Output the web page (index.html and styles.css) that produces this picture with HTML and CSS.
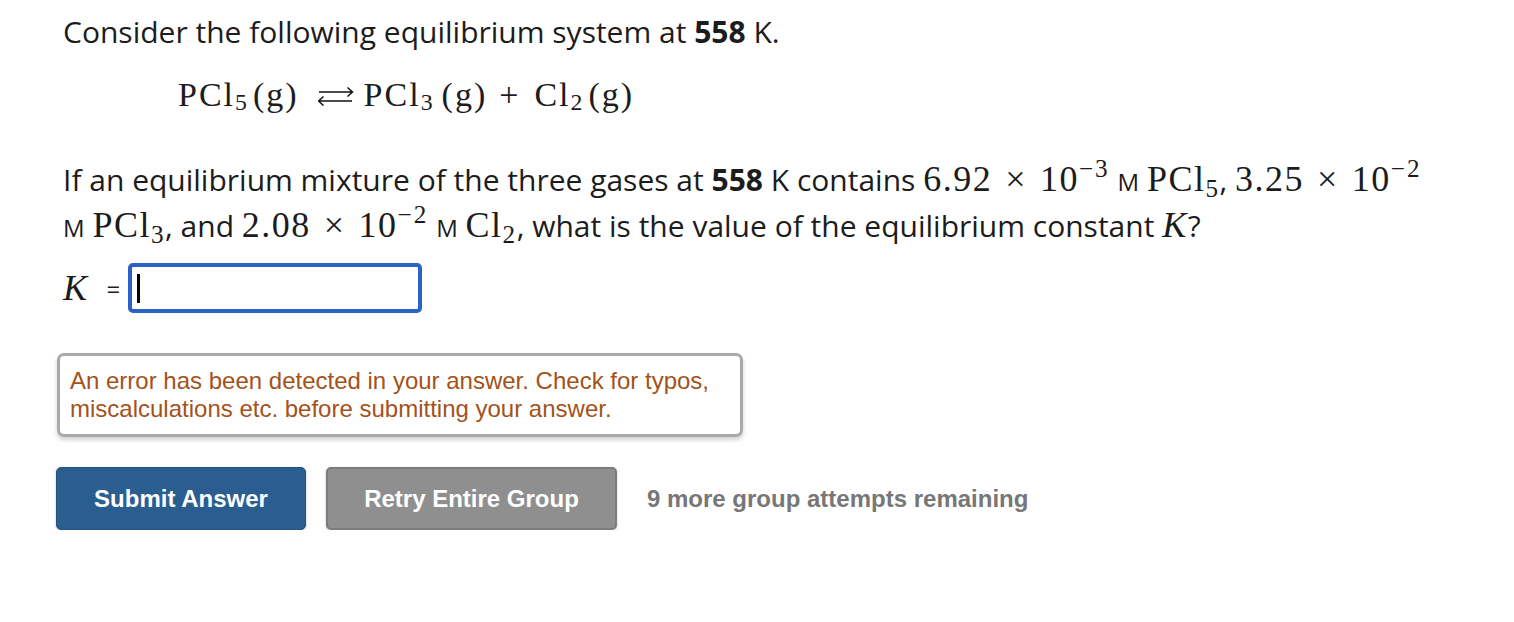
FILE: index.html
```html
<!DOCTYPE html>
<html>
<head>
<meta charset="utf-8">
<link rel="stylesheet" href="styles.css">
</head>
<body>
<div class="page">
  <p class="intro">Consider the following equilibrium system at <b>558</b> K.</p>
  <div class="equation">
    <span class="dm">PCl<sub>5</sub></span><span class="dm paren">(g)</span>
    <svg class="arrows" width="36" height="20" viewBox="0 0 36 20"><path d="M1 6 H34 M29.5 1.5 L34.5 6 L29.5 10.5 M1 15 H34 M5.5 10.5 L0.5 15 L5.5 19.5" fill="none" stroke="#111" stroke-width="1.5"/></svg>
    <span class="dm">PCl<sub>3</sub></span><span class="dm paren wide">(g)</span>
    <span class="dm op">+</span>
    <span class="dm">Cl<sub>2</sub></span><span class="dm paren">(g)</span>
  </div>
  <p class="question">If an equilibrium mixture of the three gases at <b>558</b> K contains <span class="m">6.92<span class="times">×</span>10<sup>−3</sup></span> <span class="unit">M</span> <span class="m">PCl<sub>5</sub></span>, <span class="m">3.25<span class="times">×</span>10<sup>−2</sup></span> <span class="unit">M</span> <span class="m">PCl<sub>3</sub></span>, and <span class="m">2.08<span class="times">×</span>10<sup>−2</sup></span> <span class="unit">M</span> <span class="m">Cl<sub>2</sub></span>, what is the value of the equilibrium constant <span class="m"><i>K</i></span>?</p>
  <div class="answer">
    <span class="m"><i>K</i></span><span class="eq">=</span>
    <div class="input"><span class="caret"></span></div>
  </div>
  <div class="error">An error has been detected in your answer. Check for typos, miscalculations etc. before submitting your answer.</div>
  <div class="actions">
    <button class="btn submit">Submit Answer</button>
    <button class="btn retry">Retry Entire Group</button>
    <span class="remaining">9 more group attempts remaining</span>
  </div>
</div>
</body>
</html>
```

FILE: styles.css
```css
html, body {
  margin: 0;
  padding: 0;
  background: #fff;
}
.page {
  padding: 10px 0 0 63px;
  font-family: "Open Sans", "Liberation Sans", sans-serif;
  font-size: 30px;
  color: #1c1c1c;
}
p { margin: 0; }
.intro {
  line-height: 44px;
}
.m {
  font-family: "Liberation Serif", "DejaVu Serif", serif;
  font-size: 36px;
  line-height: 1;
  letter-spacing: 1.5px;
}
.m sub {
  font-size: 0.7em;
  vertical-align: -0.25em;
  line-height: 0;
}
.m sup {
  font-size: 0.7em;
  vertical-align: 0.55em;
  line-height: 0;
  letter-spacing: 2px;
}
.m i { font-style: italic; }
.times { margin: 0 0.36em; }
.unit { font-size: 24px; }
.equation {
  display: flex;
  align-items: baseline;
  margin: 22px 0 0 115px;
  height: 44px;
}
.dm {
  font-family: "Liberation Serif", "DejaVu Serif", serif;
  font-size: 34px;
  letter-spacing: 2px;
}
.dm sub {
  font-size: 0.7em;
  vertical-align: -0.15em;
  line-height: 0;
}
.equation .paren { margin-left: 4px; }
.equation .paren.wide { margin-left: 7px; }
.equation .arrows { margin: 0 10px 0 19px; }
.equation .op { margin: 0 14px 0 12px; }
.question {
  margin-top: 38px;
  line-height: 44px;
  max-width: 1375px;
}
.answer {
  display: flex;
  align-items: center;
  margin-top: 12px;
  height: 52px;
}
.answer .eq { margin: 0 8px 0 18px; font-size: 24px; }
.input {
  width: 281px;
  height: 42px;
  border: 4px solid #2c62c6;
  border-radius: 5px;
  display: flex;
  align-items: center;
  padding-left: 5px;
}
.caret {
  width: 3px;
  height: 29px;
  background: #000;
}
.error {
  margin: 39px 0 0 -6px;
  width: 660px;
  border: 3px solid #a9a9ad;
  border-radius: 7px;
  box-shadow: 0 3px 4px rgba(0,0,0,0.18);
  padding: 11px 10px 11px 10px;
  font-family: "Liberation Sans", Arial, sans-serif;
  font-size: 24px;
  line-height: 28px;
  color: #a3521a;
}
.actions {
  display: flex;
  align-items: center;
  margin: 30px 0 0 -7px;
  gap: 20px;
}
.btn {
  height: 63px;
  border-radius: 5px;
  font-family: "Liberation Sans", Arial, sans-serif;
  font-weight: bold;
  font-size: 24px;
  color: #fff;
  cursor: pointer;
  box-shadow: 0 1px 3px rgba(0,0,0,0.2);
}
.submit {
  width: 250px;
  background: #2a5e91;
  border: 1px solid #245282;
}
.retry {
  width: 291px;
  background: #8f8f8f;
  border: 2px solid #7c7c7c;
}
.remaining {
  margin-left: 10px;
  font-family: "Liberation Sans", Arial, sans-serif;
  font-weight: bold;
  font-size: 24px;
  color: #777;
}
```
